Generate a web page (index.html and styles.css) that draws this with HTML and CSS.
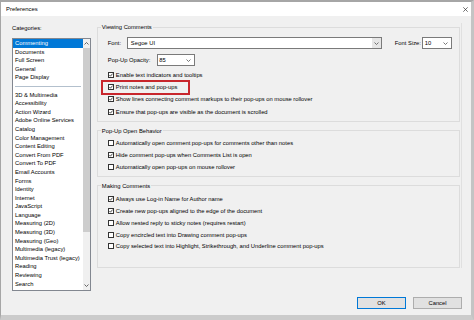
FILE: index.html
```html
<!DOCTYPE html>
<html lang="en">
<head>
    <meta charset="UTF-8">
    <meta name="viewport" content="width=device-width, initial-scale=1.0">
    <title>Preferences</title>
    <link rel="stylesheet" href="styles.css">
</head>
<body>

<div class="window">
    <!-- Title bar -->
    <div class="titlebar">
        <span>Preferences</span>
        <svg class="close" width="5" height="5" viewBox="0 0 5 5">
            <path d="M0.3 0.3 L4.7 4.7 M4.7 0.3 L0.3 4.7" stroke="#333" stroke-width="0.7"/>
        </svg>
    </div>

    <div class="content">
        <div class="main">
            <!-- Categories -->
            <div class="categories">
                <div class="cat-label">Categories:</div>
                <div class="listbox">
                    <ul class="items">
                        <li class="selected">Commenting</li>
                        <li>Documents</li>
                        <li>Full Screen</li>
                        <li>General</li>
                        <li>Page Display</li>
                        <li class="sep"></li>
                        <li>3D &amp; Multimedia</li>
                        <li>Accessibility</li>
                        <li>Action Wizard</li>
                        <li>Adobe Online Services</li>
                        <li>Catalog</li>
                        <li>Color Management</li>
                        <li>Content Editing</li>
                        <li>Convert From PDF</li>
                        <li>Convert To PDF</li>
                        <li>Email Accounts</li>
                        <li>Forms</li>
                        <li>Identity</li>
                        <li>Internet</li>
                        <li>JavaScript</li>
                        <li>Language</li>
                        <li>Measuring (2D)</li>
                        <li>Measuring (3D)</li>
                        <li>Measuring (Geo)</li>
                        <li>Multimedia (legacy)</li>
                        <li>Multimedia Trust (legacy)</li>
                        <li>Reading</li>
                        <li>Reviewing</li>
                        <li>Search</li>
                    </ul>
                    <div class="scrollbar">
                        <div class="scroll-btn">
                            <svg width="5" height="3" viewBox="0 0 5 3"><polyline points="0.5,2.5 2.5,0.5 4.5,2.5" fill="none" stroke="#444" stroke-width="0.8"/></svg>
                        </div>
                        <div class="thumb"></div>
                        <div class="track"></div>
                        <div class="scroll-btn">
                            <svg width="5" height="3" viewBox="0 0 5 3"><polyline points="0.5,0.5 2.5,2.5 4.5,0.5" fill="none" stroke="#444" stroke-width="0.8"/></svg>
                        </div>
                    </div>
                </div>
            </div>

            <!-- Settings panel -->
            <div class="panel">
                <fieldset class="group viewing">
                    <legend>Viewing Comments</legend>
                    <div class="row field-row font-row">
                        <span class="field-label font-label">Font:</span>
                        <div class="combo combo-font">
                            <span class="value">Segoe UI</span>
                            <span class="drop">
                                <svg width="5" height="3" viewBox="0 0 5 3"><polyline points="0.5,0.5 2.5,2.5 4.5,0.5" fill="none" stroke="#555" stroke-width="0.8"/></svg>
                            </span>
                        </div>
                        <span class="field-label size-label">Font Size:</span>
                        <div class="combo combo-size">
                            <span class="value">10</span>
                            <svg width="5" height="3" viewBox="0 0 5 3"><polyline points="0.5,0.5 2.5,2.5 4.5,0.5" fill="none" stroke="#555" stroke-width="0.8"/></svg>
                        </div>
                    </div>
                    <div class="row field-row opacity-row">
                        <span class="field-label opacity-label">Pop-Up Opacity:</span>
                        <div class="combo combo-opacity">
                            <span class="value">85</span>
                            <svg width="5" height="3" viewBox="0 0 5 3"><polyline points="0.5,0.5 2.5,2.5 4.5,0.5" fill="none" stroke="#555" stroke-width="0.8"/></svg>
                        </div>
                    </div>
                    <div class="checks">
                        <div class="row check"><span class="box"><svg width="4" height="4" viewBox="0 0 4 4"><polyline points="0.4,2 1.5,3.2 3.6,0.6" fill="none" stroke="#222" stroke-width="0.8"/></svg></span>Enable text indicators and tooltips</div>
                        <div class="row check marked"><span class="box"><svg width="4" height="4" viewBox="0 0 4 4"><polyline points="0.4,2 1.5,3.2 3.6,0.6" fill="none" stroke="#222" stroke-width="0.8"/></svg></span>Print notes and pop-ups</div>
                        <div class="row check"><span class="box"><svg width="4" height="4" viewBox="0 0 4 4"><polyline points="0.4,2 1.5,3.2 3.6,0.6" fill="none" stroke="#222" stroke-width="0.8"/></svg></span>Show lines connecting comment markups to their pop-ups on mouse rollover</div>
                        <div class="row check"><span class="box"><svg width="4" height="4" viewBox="0 0 4 4"><polyline points="0.4,2 1.5,3.2 3.6,0.6" fill="none" stroke="#222" stroke-width="0.8"/></svg></span>Ensure that pop-ups are visible as the document is scrolled</div>
                    </div>
                </fieldset>

                <fieldset class="group open">
                    <legend>Pop-Up Open Behavior</legend>
                    <div class="row check"><span class="box"></span>Automatically open comment pop-ups for comments other than notes</div>
                    <div class="row check"><span class="box"><svg width="4" height="4" viewBox="0 0 4 4"><polyline points="0.4,2 1.5,3.2 3.6,0.6" fill="none" stroke="#222" stroke-width="0.8"/></svg></span>Hide comment pop-ups when Comments List is open</div>
                    <div class="row check"><span class="box"></span>Automatically open pop-ups on mouse rollover</div>
                </fieldset>

                <fieldset class="group making">
                    <legend>Making Comments</legend>
                    <div class="row check"><span class="box"><svg width="4" height="4" viewBox="0 0 4 4"><polyline points="0.4,2 1.5,3.2 3.6,0.6" fill="none" stroke="#222" stroke-width="0.8"/></svg></span>Always use Log-in Name for Author name</div>
                    <div class="row check"><span class="box"><svg width="4" height="4" viewBox="0 0 4 4"><polyline points="0.4,2 1.5,3.2 3.6,0.6" fill="none" stroke="#222" stroke-width="0.8"/></svg></span>Create new pop-ups aligned to the edge of the document</div>
                    <div class="row check"><span class="box"></span>Allow nested reply to sticky notes (requires restart)</div>
                    <div class="row check"><span class="box"></span>Copy encircled text into Drawing comment pop-ups</div>
                    <div class="row check"><span class="box"></span>Copy selected text into Highlight, Strikethrough, and Underline comment pop-ups</div>
                </fieldset>
            </div>
        </div>

        <!-- Dialog buttons -->
        <div class="buttons">
            <button class="btn default">OK</button>
            <button class="btn">Cancel</button>
        </div>
    </div>
</div>

</body>
</html>
```

FILE: styles.css
```css
body {
    margin: 0;
    font-family: "Liberation Sans", Arial, sans-serif;
    font-size: 5.8px;
    color: #000;
}

/* Window frame */
.window {
    width: 474px;
    height: 320px;
    box-sizing: border-box;
    border-top: 2px solid #a6a6a6;
    border-left: 1px solid #a6a6a6;
    border-right: 3px solid #c4c4c4;
    border-bottom: 5px solid #cbcbcb;
    display: flex;
    flex-direction: column;
    background-color: #f0f0f0;
}
.titlebar {
    height: 14px;
    flex-shrink: 0;
    background-color: white;
    display: flex;
    align-items: center;
    justify-content: space-between;
    padding: 0 3px 0 5px;
    font-size: 5.9px;
}

.content {
    flex: 1;
    display: flex;
    flex-direction: column;
    padding: 7px 9px 6px 11px;
}
.main {
    display: flex;
    gap: 6px;
    height: 268px;
}

/* Categories list */
.categories {
    width: 79px;
    padding-top: 1px;
}
.cat-label {
    line-height: 8px;
    margin-bottom: 6px;
}
.listbox {
    height: 253px;
    box-sizing: border-box;
    border: 1px solid #828790;
    background-color: white;
    display: flex;
}
.items {
    list-style: none;
    margin: 0;
    padding: 0;
    flex: 1;
    overflow: hidden;
    line-height: 8.6px;
}
.items li {
    height: 8.6px;
    padding-left: 2px;
    white-space: nowrap;
}
.items li.selected {
    background-color: #0078d7;
    color: white;
}
.items li.sep {
    display: flex;
    align-items: center;
    padding: 0 2px;
}
.items li.sep::before {
    content: "";
    flex: 1;
    height: 1px;
    background-color: #b3c0cd;
}
.scrollbar {
    width: 7px;
    display: flex;
    flex-direction: column;
    background-color: #f0f0f0;
}
.scroll-btn {
    height: 9px;
    display: flex;
    align-items: center;
    justify-content: center;
}
.thumb {
    height: 184px;
    background-color: #cdcdcd;
}
.track {
    flex: 1;
}

/* Right panel with group boxes */
.panel {
    width: 364px;
    align-self: flex-start;
    padding-right: 1px;
    border-right: 1px solid #e0e0e0;
}
.group {
    margin: 0;
    min-width: 0;
    padding: 0 0 0 3px;
    border: 1px solid #dcdcdc;
}
.group + .group {
    margin-top: 5px;
}
.group legend {
    padding: 0 1px;
    line-height: 8px;
}
.viewing {
    padding-bottom: 3.3px;
}
.open {
    padding-top: 2.4px;
    padding-bottom: 3.5px;
}
.making {
    padding-top: 3px;
    padding-bottom: 14.5px;
}

.row {
    display: flex;
    align-items: center;
    padding-left: 7px;
    white-space: nowrap;
}
.field-row {
    height: 12px;
}
.font-row {
    margin-top: 6px;
}
.opacity-row {
    margin-top: 5px;
}
.checks {
    margin-top: 2.9px;
}
.field-label {
    flex-shrink: 0;
}
.font-label {
    width: 19px;
}
.size-label {
    width: 27px;
    margin-left: 13px;
}
.opacity-label {
    width: 49px;
}
.combo {
    height: 12px;
    box-sizing: border-box;
    border: 1px solid #7a7a7a;
    background-color: white;
    display: flex;
    align-items: center;
    justify-content: space-between;
}
.combo-font {
    width: 255px;
    padding-left: 3px;
}
.combo-font .drop {
    width: 9px;
    align-self: stretch;
    background-color: #e6e6e6;
    display: flex;
    align-items: center;
    justify-content: center;
}
.combo-size {
    width: 30px;
    padding: 0 3px 0 2px;
}
.combo-opacity {
    width: 38px;
    padding: 0 3px 0 1.5px;
}

/* Checkboxes */
.viewing .check {
    height: 12.2px;
}
.open .check {
    height: 11.7px;
}
.making .check {
    height: 11.9px;
}
.box {
    width: 6px;
    height: 6px;
    box-sizing: border-box;
    border: 1px solid #333;
    background-color: white;
    margin-right: 2px;
    display: flex;
    align-items: center;
    justify-content: center;
    flex-shrink: 0;
}
.check.marked {
    position: relative;
}
.check.marked::after {
    content: "";
    position: absolute;
    left: 0;
    top: -1.1px;
    width: 89px;
    height: 15px;
    box-sizing: border-box;
    border: 2px solid #c8262c;
}

/* Dialog buttons */
.buttons {
    display: flex;
    justify-content: flex-end;
    gap: 7px;
    margin-top: 6px;
}
.btn {
    width: 49px;
    height: 12px;
    box-sizing: border-box;
    padding: 0;
    border: 1px solid #adadad;
    background-color: #e1e1e1;
    font-family: inherit;
    font-size: 5.8px;
    color: #000;
}
.btn.default {
    border-color: #0078d7;
}
```
